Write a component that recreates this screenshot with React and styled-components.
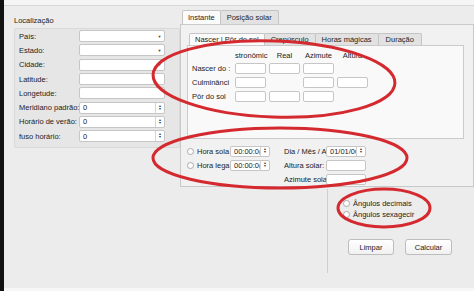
import React from "react";
import styled, { createGlobalStyle } from "styled-components";

const GlobalStyle = createGlobalStyle`
  html, body { margin: 0; padding: 0; background: #ececec; }
  body { font-family: "Liberation Sans", Arial, sans-serif; font-size: 7.5px; color: #222; }
`;

const Window = styled.div`
  position: relative;
  width: 474px;
  height: 291px;
  box-sizing: border-box;
  background: #ececec;
  border-left: 4px solid #111;
  display: flex;
  flex-direction: column;
  overflow: hidden;
`;

const TopStrip = styled.div`
  height: 5px;
  background: #f5f5f5;
  border-bottom: 1px solid #d6d6d6;
`;

const BottomStrip = styled.div`
  height: 3px;
  background: #f7f7f7;
`;

const Body = styled.div`
  flex: 1;
  display: flex;
`;

const LeftCol = styled.div`
  width: 166px;
  padding: 9px 0 0 10px;
`;

const GroupTitle = styled.div`
  height: 12px;
  line-height: 12px;
  margin-bottom: 1px;
`;

const GroupBox = styled.div`
  background: #e6e6e6;
  border: 1px solid #d9d9d9;
  border-radius: 2px;
  padding: 0 4px 4px 4px;
  display: grid;
  grid-template-columns: 60px 86px;
  grid-auto-rows: 14.3px;
  align-items: center;
`;

const Label = styled.span`
  white-space: nowrap;
  overflow: hidden;
`;

const Field = styled.div`
  height: ${(p) => p.$h || 11}px;
  width: ${(p) => (p.$w ? `${p.$w}px` : "auto")};
  box-sizing: border-box;
  background: #fff;
  border: 1px solid #c6c6c6;
  border-radius: 2px;
  display: flex;
  align-items: center;
  padding-left: 3px;
  overflow: hidden;
  white-space: nowrap;
`;

const FieldText = styled.span`
  flex: 1;
  overflow: hidden;
`;

const ComboArrow = styled.span`
  width: 9px;
  font-size: 4px;
  color: #444;
  text-align: center;
`;

const Stepper = styled.span`
  flex: none;
  width: 8px;
  height: 100%;
  border-left: 1px solid #d4d4d4;
  display: flex;
  flex-direction: column;
  justify-content: center;
  align-items: center;
  font-size: 3.5px;
  line-height: 3px;
  color: #444;
`;

const RightCol = styled.div`
  flex: 1;
  padding-top: 4px;
  display: flex;
  flex-direction: column;
`;

const TabBar = styled.div`
  display: flex;
  margin-left: ${(p) => p.$indent || 3}px;
  height: ${(p) => p.$h || 14}px;
`;

const Tab = styled.div`
  padding: 0 ${(p) => p.$pad || 6}px;
  display: flex;
  align-items: center;
  white-space: nowrap;
  box-sizing: border-box;
  border: 1px solid #c4c4c4;
  border-bottom: none;
  margin-left: -1px;
  background: ${(p) => (p.$active ? "#fbfbfb" : "#e2e2e2")};
  border-radius: 2px 2px 0 0;
`;

const OuterPanel = styled.div`
  width: 294px;
  height: 163px;
  box-sizing: border-box;
  background: #f1f1f1;
  border: 1px solid #c9c9c9;
  padding: 8px 9px 0 6px;
`;

const InnerPanel = styled.div`
  height: 94px;
  box-sizing: border-box;
  background: #f9f9f9;
  border: 1px solid #cbcbcb;
  padding: 3px 0 0 4px;
  display: grid;
  grid-template-columns: 40px 31px 31px 31px 31px;
  column-gap: 3px;
  grid-template-rows: 12px 14px 14px 14px;
  align-items: center;
`;

const ColHead = styled.span`
  text-align: center;
  white-space: nowrap;
`;

const TimeGrid = styled.div`
  margin-top: 5px;
  padding-left: 0;
  display: grid;
  grid-template-columns: 43px 40px 14px 42px 40px;
  grid-template-rows: 14px 14px 14px;
  align-items: center;
`;

const RadioLabel = styled.label`
  display: flex;
  align-items: center;
  gap: 3px;
  white-space: nowrap;
  overflow: hidden;
`;

const RadioDot = styled.span`
  flex: none;
  width: 7px;
  height: 7px;
  border-radius: 50%;
  border: 1px solid #aaa;
  background: #fff;
  box-sizing: border-box;
`;

const Lower = styled.div`
  display: flex;
  height: 84px;
  margin-top: 2px;
`;

const Separator = styled.div`
  margin-left: 147px;
  width: 1px;
  background: #cfcfcf;
`;

const OptionsCol = styled.div`
  padding: 10px 0 0 15px;
  display: flex;
  flex-direction: column;
`;

const Options = styled.div`
  display: flex;
  flex-direction: column;
  gap: 2px;
`;

const Buttons = styled.div`
  display: flex;
  gap: 11px;
  margin-top: 20px;
  margin-left: 5px;
`;

const Button = styled.button`
  width: ${(p) => p.$w}px;
  height: 16px;
  font-family: inherit;
  font-size: 7.5px;
  color: #222;
  background: linear-gradient(#ffffff, #f1f1f1);
  border: 1px solid #bdbdbd;
  border-radius: 3px;
  padding: 0;
`;

const Marks = styled.svg`
  position: absolute;
  left: -4px;
  top: 0;
  pointer-events: none;
`;

function Combo() {
  return (
    <Field $h={12}>
      <FieldText />
      <ComboArrow>▼</ComboArrow>
    </Field>
  );
}

function Spin({ value, w, h = 12 }) {
  return (
    <Field $h={h} $w={w}>
      <FieldText>{value}</FieldText>
      <Stepper>
        <span>▲</span>
        <span>▼</span>
      </Stepper>
    </Field>
  );
}

function Radio({ children }) {
  return (
    <RadioLabel>
      <RadioDot />
      {children}
    </RadioLabel>
  );
}

export default function App() {
  return (
    <>
      <GlobalStyle />
      <Window>
        <TopStrip />
        <Body>
          <LeftCol>
            <GroupTitle>Localização</GroupTitle>
            <GroupBox>
              <Label>País:</Label>
              <Combo />
              <Label>Estado:</Label>
              <Combo />
              <Label>Cidade:</Label>
              <Combo />
              <Label>Latitude:</Label>
              <Field $h={12} />
              <Label>Longetude:</Label>
              <Field $h={12} />
              <Label>Meridiano padrão:</Label>
              <Spin value="0" />
              <Label>Horário de verão:</Label>
              <Spin value="0" />
              <Label>fuso horário:</Label>
              <Spin value="0" />
            </GroupBox>
          </LeftCol>

          <RightCol>
            <TabBar>
              <Tab $active $pad={5}>Instante</Tab>
              <Tab $pad={6}>Posição solar</Tab>
            </TabBar>
            <OuterPanel>
              <TabBar $indent={3} $h={12}>
                <Tab $active $pad={5}>Nascer | Pôr do sol</Tab>
                <Tab $pad={6}>Crepúsculo</Tab>
                <Tab $pad={6}>Horas mágicas</Tab>
                <Tab $pad={7}>Duração</Tab>
              </TabBar>
              <InnerPanel>
                <span />
                <ColHead>stronômic</ColHead>
                <ColHead>Real</ColHead>
                <ColHead>Azimute</ColHead>
                <ColHead>Altura</ColHead>

                <Label>Nascer do :</Label>
                <Field />
                <Field />
                <Field />
                <span />

                <Label>Culminânci</Label>
                <Field />
                <span />
                <Field />
                <Field />

                <Label>Pôr do sol</Label>
                <Field />
                <Field />
                <Field />
                <span />
              </InnerPanel>

              <TimeGrid>
                <Radio>Hora sola</Radio>
                <Spin value="00:00:0(" h={11} />
                <span />
                <Label>Dia / Mês / A</Label>
                <Spin value="01/01/00" h={11} />

                <Radio>Hora lega</Radio>
                <Spin value="00:00:0(" h={11} />
                <span />
                <Label>Altura solar:</Label>
                <Field />

                <span />
                <span />
                <span />
                <Label>Azimute sola</Label>
                <Field />
              </TimeGrid>
            </OuterPanel>

            <Lower>
              <Separator />
              <OptionsCol>
                <Options>
                  <Radio>Ângulos decimais</Radio>
                  <Radio>Ângulos sexagecir</Radio>
                </Options>
                <Buttons>
                  <Button $w={46}>Limpar</Button>
                  <Button $w={47}>Calcular</Button>
                </Buttons>
              </OptionsCol>
            </Lower>
          </RightCol>
        </Body>
        <BottomStrip />

        <Marks width="474" height="291" viewBox="0 0 474 291">
          <g fill="none" stroke="#d42a2f" strokeWidth="3">
            <ellipse cx="274" cy="79" rx="121" ry="38" transform="rotate(2 274 79)" />
            <ellipse cx="280" cy="158" rx="127" ry="30" />
            <ellipse cx="384" cy="208" rx="46" ry="19" />
          </g>
        </Marks>
      </Window>
    </>
  );
}
